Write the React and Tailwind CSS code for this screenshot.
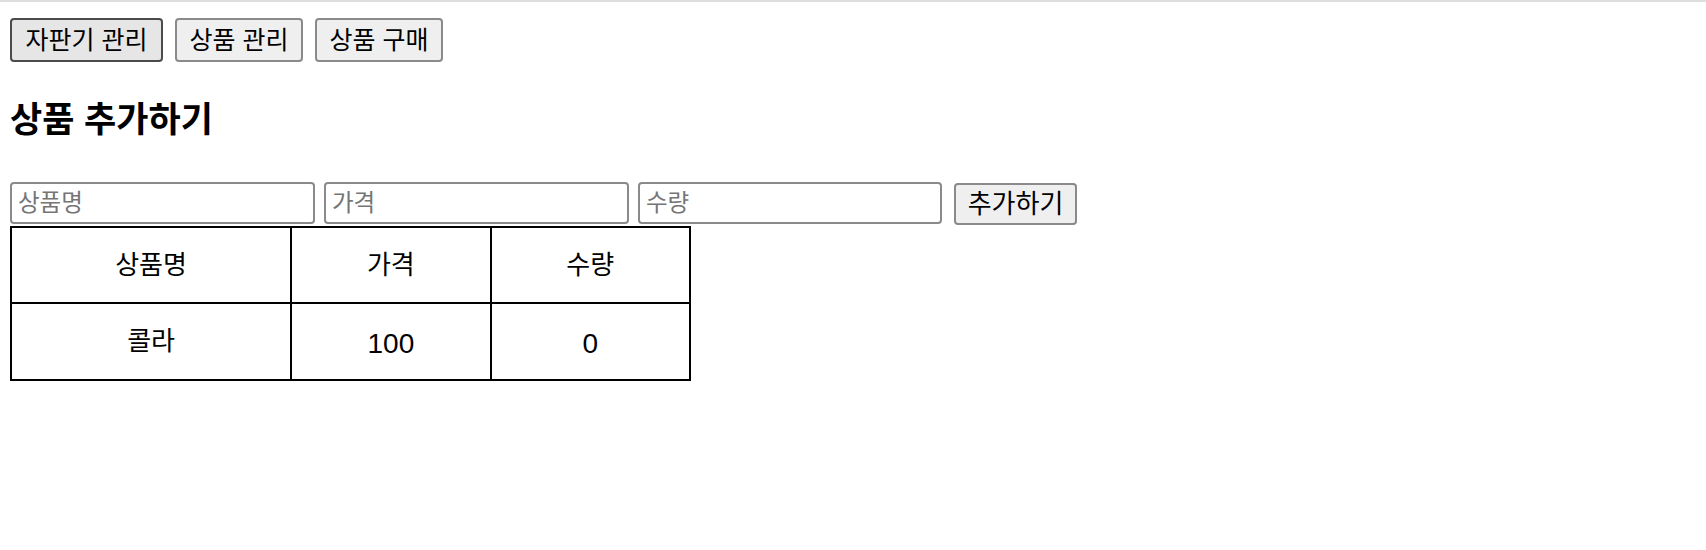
import React, { useState } from 'react';

const font = "font-['Liberation_Sans','Noto_Sans_CJK_KR',sans-serif]";

const TabButton = ({ active, children, className = '' }) => (
    <button
        className={`h-[44px] rounded-[4px] text-[25px] leading-none text-black ${active ? 'border-2 border-[#4b4b4b] bg-[#e6e6e6]' : 'border-2 border-[#8a8a8a] bg-[#efefef]'} ${className}`}
    >
        {children}
    </button>
);

export default function App() {
    const [products] = useState([{ name: '콜라', price: 100, qty: 0 }]);

    return (
        <div className={`${font} text-black bg-white min-h-[550px]`}>
            <div className="h-[2px] bg-[#dedede]" />

            <div className="flex gap-3 pl-[10px] pt-4">
                <TabButton active className="w-[153px]">자판기 관리</TabButton>
                <TabButton className="w-[128px]">상품 관리</TabButton>
                <TabButton className="w-[128px]">상품 구매</TabButton>
            </div>

            <h2 className="mt-[38px] pl-[10px] text-[35px] font-bold leading-[40px]">상품 추가하기</h2>

            <div className="mt-[42px] flex items-start gap-[9px] pl-[10px]">
                <input
                    placeholder="상품명"
                    className="w-[305px] h-[42px] rounded-[4px] border-2 border-[#8a8a8a] px-[6px] text-[23.5px] outline-none placeholder:text-[#757575]"
                />
                <input
                    placeholder="가격"
                    className="w-[305px] h-[42px] rounded-[4px] border-2 border-[#8a8a8a] px-[6px] text-[23.5px] outline-none placeholder:text-[#757575]"
                />
                <input
                    placeholder="수량"
                    className="w-[304px] h-[42px] rounded-[4px] border-2 border-[#8a8a8a] px-[6px] text-[23.5px] outline-none placeholder:text-[#757575]"
                />
                <button className="ml-[3px] mt-[1px] w-[123px] h-[42px] rounded-[4px] border-2 border-[#8a8a8a] bg-[#efefef] text-[26px] leading-none">
                    추가하기
                </button>
            </div>

            <table className="ml-[10px] mt-[1px] w-[681px] border-collapse border-2 border-black text-center">
                <thead>
                    <tr>
                        <th className="w-[281px] h-[76px] border-2 border-black text-[26px] font-normal">상품명</th>
                        <th className="w-[200px] h-[76px] border-2 border-black text-[26px] font-normal">가격</th>
                        <th className="w-[200px] h-[76px] border-2 border-black text-[26px] font-normal">수량</th>
                    </tr>
                </thead>
                <tbody>
                    {products.map(p => (
                        <tr key={p.name}>
                            <td className="h-[77px] border-2 border-black text-[26px]">{p.name}</td>
                            <td className="h-[77px] border-2 border-black pt-[4px] text-[28px]">{p.price}</td>
                            <td className="h-[77px] border-2 border-black pt-[4px] text-[28px]">{p.qty}</td>
                        </tr>
                    ))}
                </tbody>
            </table>
        </div>
    );
}
